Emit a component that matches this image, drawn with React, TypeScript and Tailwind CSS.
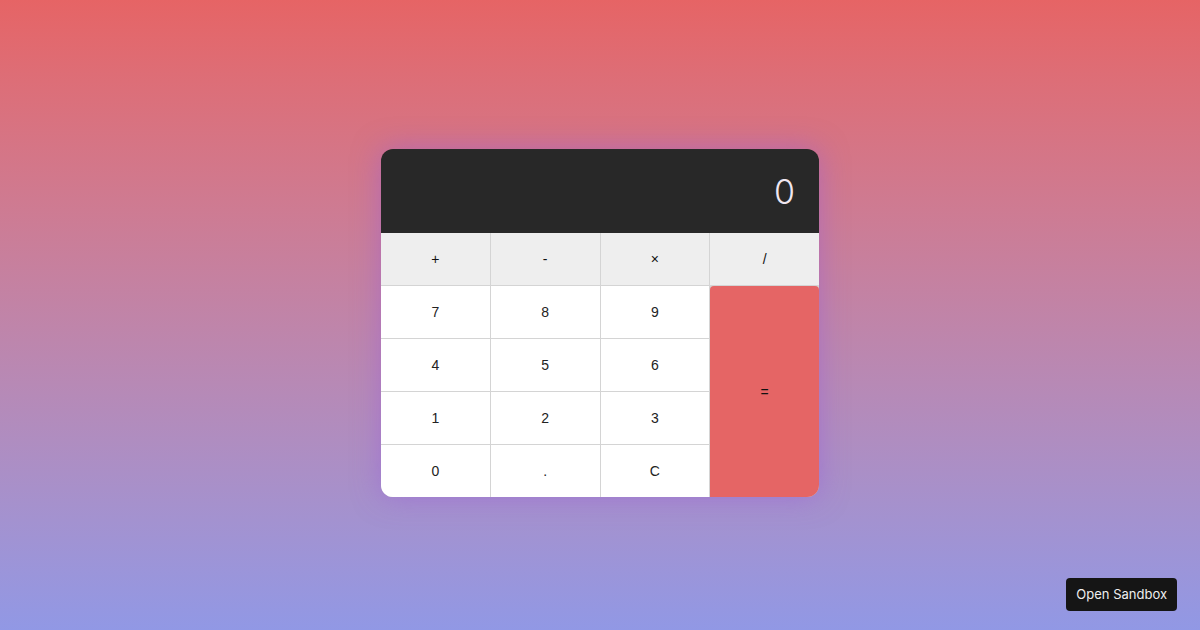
import React from "react";

const operators = ["+", "-", "×", "/"];
const digits = ["7", "8", "9", "4", "5", "6", "1", "2", "3", "0", ".", "C"];

export default function App() {
  return (
    <div className="relative flex h-[630px] w-full items-center justify-center bg-gradient-to-b from-[#e66465] to-[#9198e5] pt-4 font-['Liberation_Sans',Arial,sans-serif]">
      <div className="w-[438px] overflow-hidden rounded-xl shadow-[0_0_28px_rgba(150,90,220,0.5)]">
        <div className="flex h-[84px] items-center justify-end bg-[#282828] px-6 font-['Inter',sans-serif] text-[34px] font-light text-[#f0e6f0]">
          0
        </div>
        <div className="grid grid-cols-4 grid-rows-[repeat(5,52px)] gap-px bg-[#d4d4d4]">
          {operators.map((op) => (
            <button key={op} className="flex items-center justify-center bg-[#eeeeee] text-sm text-[#111]">
              {op}
            </button>
          ))}
          {digits.slice(0, 3).map((d) => (
            <button key={d} className="flex items-center justify-center bg-white text-sm text-[#222]">
              {d}
            </button>
          ))}
          <button className="col-start-4 row-span-4 row-start-2 flex items-center justify-center rounded-t bg-[#e56565] text-sm text-[#111]">
            =
          </button>
          {digits.slice(3).map((d) => (
            <button key={d} className="flex items-center justify-center bg-white text-sm text-[#222]">
              {d}
            </button>
          ))}
        </div>
      </div>
      <button className="absolute bottom-[19px] right-[23px] h-[33px] rounded bg-[#151515] px-[10px] font-['Inter',sans-serif] text-[13px] text-[#eee]">
        Open Sandbox
      </button>
    </div>
  );
}
